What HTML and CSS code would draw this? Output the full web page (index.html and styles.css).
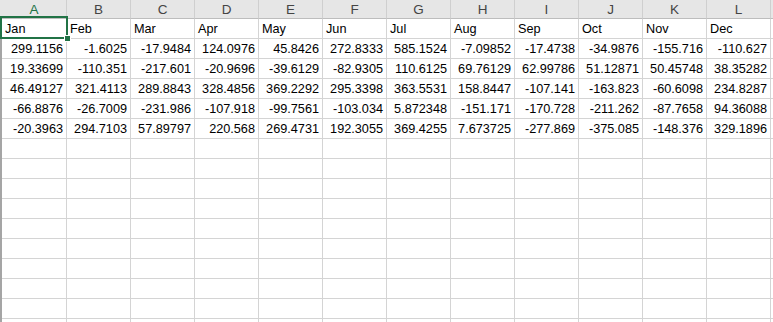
FILE: index.html
```html
<!DOCTYPE html>
<html>
<head>
<meta charset="utf-8">
<link rel="stylesheet" href="styles.css">
</head>
<body>
<div class="sheet">
  <div class="row head">
    <div class="cell first hcell sel">A</div>
    <div class="cell hcell">B</div>
    <div class="cell hcell">C</div>
    <div class="cell hcell">D</div>
    <div class="cell hcell">E</div>
    <div class="cell hcell">F</div>
    <div class="cell hcell">G</div>
    <div class="cell hcell">H</div>
    <div class="cell hcell">I</div>
    <div class="cell hcell">J</div>
    <div class="cell hcell">K</div>
    <div class="cell hcell">L</div>
    <div class="cell hcell"></div>
  </div>
  <div class="row">
    <div class="cell first txt active">Jan<span class="selbox"><span class="handle"></span></span></div>
    <div class="cell txt">Feb</div>
    <div class="cell txt">Mar</div>
    <div class="cell txt">Apr</div>
    <div class="cell txt">May</div>
    <div class="cell txt">Jun</div>
    <div class="cell txt">Jul</div>
    <div class="cell txt">Aug</div>
    <div class="cell txt">Sep</div>
    <div class="cell txt">Oct</div>
    <div class="cell txt">Nov</div>
    <div class="cell txt">Dec</div>
    <div class="cell txt"></div>
  </div>
  <div class="row">
    <div class="cell first num">299.1156</div>
    <div class="cell num">-1.6025</div>
    <div class="cell num">-17.9484</div>
    <div class="cell num">124.0976</div>
    <div class="cell num">45.8426</div>
    <div class="cell num">272.8333</div>
    <div class="cell num">585.1524</div>
    <div class="cell num">-7.09852</div>
    <div class="cell num">-17.4738</div>
    <div class="cell num">-34.9876</div>
    <div class="cell num">-155.716</div>
    <div class="cell num">-110.627</div>
    <div class="cell num"></div>
  </div>
  <div class="row">
    <div class="cell first num">19.33699</div>
    <div class="cell num">-110.351</div>
    <div class="cell num">-217.601</div>
    <div class="cell num">-20.9696</div>
    <div class="cell num">-39.6129</div>
    <div class="cell num">-82.9305</div>
    <div class="cell num">110.6125</div>
    <div class="cell num">69.76129</div>
    <div class="cell num">62.99786</div>
    <div class="cell num">51.12871</div>
    <div class="cell num">50.45748</div>
    <div class="cell num">38.35282</div>
    <div class="cell num"></div>
  </div>
  <div class="row">
    <div class="cell first num">46.49127</div>
    <div class="cell num">321.4113</div>
    <div class="cell num">289.8843</div>
    <div class="cell num">328.4856</div>
    <div class="cell num">369.2292</div>
    <div class="cell num">295.3398</div>
    <div class="cell num">363.5531</div>
    <div class="cell num">158.8447</div>
    <div class="cell num">-107.141</div>
    <div class="cell num">-163.823</div>
    <div class="cell num">-60.6098</div>
    <div class="cell num">234.8287</div>
    <div class="cell num"></div>
  </div>
  <div class="row">
    <div class="cell first num">-66.8876</div>
    <div class="cell num">-26.7009</div>
    <div class="cell num">-231.986</div>
    <div class="cell num">-107.918</div>
    <div class="cell num">-99.7561</div>
    <div class="cell num">-103.034</div>
    <div class="cell num">5.872348</div>
    <div class="cell num">-151.171</div>
    <div class="cell num">-170.728</div>
    <div class="cell num">-211.262</div>
    <div class="cell num">-87.7658</div>
    <div class="cell num">94.36088</div>
    <div class="cell num"></div>
  </div>
  <div class="row">
    <div class="cell first num">-20.3963</div>
    <div class="cell num">294.7103</div>
    <div class="cell num">57.89797</div>
    <div class="cell num">220.568</div>
    <div class="cell num">269.4731</div>
    <div class="cell num">192.3055</div>
    <div class="cell num">369.4255</div>
    <div class="cell num">7.673725</div>
    <div class="cell num">-277.869</div>
    <div class="cell num">-375.085</div>
    <div class="cell num">-148.376</div>
    <div class="cell num">329.1896</div>
    <div class="cell num"></div>
  </div>
  <div class="row"><div class="cell first"></div><div class="cell"></div><div class="cell"></div><div class="cell"></div><div class="cell"></div><div class="cell"></div><div class="cell"></div><div class="cell"></div><div class="cell"></div><div class="cell"></div><div class="cell"></div><div class="cell"></div><div class="cell"></div></div>
  <div class="row"><div class="cell first"></div><div class="cell"></div><div class="cell"></div><div class="cell"></div><div class="cell"></div><div class="cell"></div><div class="cell"></div><div class="cell"></div><div class="cell"></div><div class="cell"></div><div class="cell"></div><div class="cell"></div><div class="cell"></div></div>
  <div class="row"><div class="cell first"></div><div class="cell"></div><div class="cell"></div><div class="cell"></div><div class="cell"></div><div class="cell"></div><div class="cell"></div><div class="cell"></div><div class="cell"></div><div class="cell"></div><div class="cell"></div><div class="cell"></div><div class="cell"></div></div>
  <div class="row"><div class="cell first"></div><div class="cell"></div><div class="cell"></div><div class="cell"></div><div class="cell"></div><div class="cell"></div><div class="cell"></div><div class="cell"></div><div class="cell"></div><div class="cell"></div><div class="cell"></div><div class="cell"></div><div class="cell"></div></div>
  <div class="row"><div class="cell first"></div><div class="cell"></div><div class="cell"></div><div class="cell"></div><div class="cell"></div><div class="cell"></div><div class="cell"></div><div class="cell"></div><div class="cell"></div><div class="cell"></div><div class="cell"></div><div class="cell"></div><div class="cell"></div></div>
  <div class="row"><div class="cell first"></div><div class="cell"></div><div class="cell"></div><div class="cell"></div><div class="cell"></div><div class="cell"></div><div class="cell"></div><div class="cell"></div><div class="cell"></div><div class="cell"></div><div class="cell"></div><div class="cell"></div><div class="cell"></div></div>
  <div class="row"><div class="cell first"></div><div class="cell"></div><div class="cell"></div><div class="cell"></div><div class="cell"></div><div class="cell"></div><div class="cell"></div><div class="cell"></div><div class="cell"></div><div class="cell"></div><div class="cell"></div><div class="cell"></div><div class="cell"></div></div>
  <div class="row"><div class="cell first"></div><div class="cell"></div><div class="cell"></div><div class="cell"></div><div class="cell"></div><div class="cell"></div><div class="cell"></div><div class="cell"></div><div class="cell"></div><div class="cell"></div><div class="cell"></div><div class="cell"></div><div class="cell"></div></div>
  <div class="row"><div class="cell first"></div><div class="cell"></div><div class="cell"></div><div class="cell"></div><div class="cell"></div><div class="cell"></div><div class="cell"></div><div class="cell"></div><div class="cell"></div><div class="cell"></div><div class="cell"></div><div class="cell"></div><div class="cell"></div></div>
  <div class="row"><div class="cell first"></div><div class="cell"></div><div class="cell"></div><div class="cell"></div><div class="cell"></div><div class="cell"></div><div class="cell"></div><div class="cell"></div><div class="cell"></div><div class="cell"></div><div class="cell"></div><div class="cell"></div><div class="cell"></div></div>
</div>
</body>
</html>
```

FILE: styles.css
```css
html, body {
  margin: 0;
  padding: 0;
  background: #ffffff;
  overflow: hidden;
}
.sheet {
  width: 773px;
  height: 322px;
  overflow: hidden;
  font-family: "Liberation Sans", Arial, sans-serif;
  font-size: 12.7px;
  color: #000;
}
.row {
  display: flex;
  height: 20px;
  border-left: 2px solid #a5a5a5;
}
.row.head {
  height: 19px;
  background: #e6e6e6;
  border-left: 2px solid #e6e6e6;
}
.cell {
  flex: 0 0 64px;
  box-sizing: border-box;
  height: 100%;
  border-right: 1px solid #d4d4d4;
  border-bottom: 1px solid #d4d4d4;
  display: flex;
  align-items: flex-end;
  padding: 0 3px 2px 3px;
  white-space: nowrap;
  overflow: visible;
  position: relative;
}
.cell.first {
  flex-basis: 65px;
}
.hcell {
  justify-content: center;
  align-items: center;
  padding: 0;
  color: #444;
  border-right: 1px solid #cfcfcf;
  border-bottom: 1px solid #bdbdbd;
  font-size: 13.5px;
}
.hcell.sel {
  color: #217346;
}
.num {
  justify-content: flex-end;
}
.txt {
  justify-content: flex-start;
}
.selbox {
  position: absolute;
  left: -2px;
  top: -3px;
  width: 68px;
  height: 23px;
  box-sizing: border-box;
  border: 2px solid #217346;
  z-index: 2;
}
.handle {
  position: absolute;
  right: -5px;
  bottom: -5px;
  width: 5px;
  height: 5px;
  background: #217346;
  border: 1px solid #fff;
}
```
